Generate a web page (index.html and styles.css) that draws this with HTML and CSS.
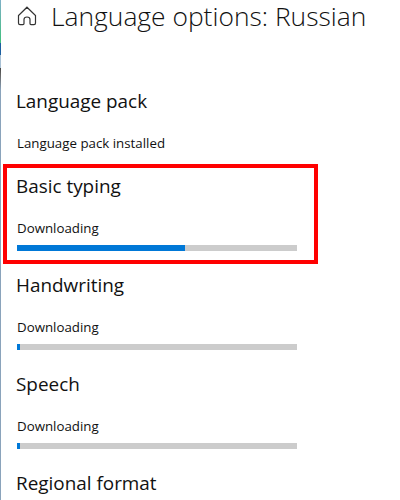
FILE: index.html
```html
<!DOCTYPE html>
<html lang="en">
<head>
<meta charset="utf-8">
<title>Language options: Russian</title>
<link rel="stylesheet" href="styles.css">
</head>
<body>
<div class="edge"></div>
<main class="page">
  <header class="header">
    <svg class="home" width="20" height="20" viewBox="0 0 20 20" fill="none" stroke="#333" stroke-width="1.2"><path d="M10 1.2 L18.5 9.5 V17 Q18.5 18.6 17 18.6 H14 Q13 18.6 13 17.6 V13.5 Q13 11 10 11 Q7 11 7 13.5 V17.6 Q7 18.6 6 18.6 H3 Q1.5 18.6 1.5 17 V9.5 Z"/></svg>
    <h1 class="title">Language options: Russian</h1>
  </header>
  <section class="item first">
    <h2 class="name">Language pack</h2>
    <p class="status">Language pack installed</p>
  </section>
  <section class="item highlighted">
    <h2 class="name">Basic typing</h2>
    <p class="status">Downloading</p>
    <div class="bar"><div class="fill" style="width:60%"></div></div>
  </section>
  <section class="item">
    <h2 class="name">Handwriting</h2>
    <p class="status">Downloading</p>
    <div class="bar"><div class="fill" style="width:1.2%"></div></div>
  </section>
  <section class="item">
    <h2 class="name">Speech</h2>
    <p class="status">Downloading</p>
    <div class="bar"><div class="fill" style="width:1.2%"></div></div>
  </section>
  <section class="item">
    <h2 class="name">Regional format</h2>
  </section>
</main>
</body>
</html>
```
FILE: styles.css
```css
html, body { margin: 0; padding: 0; height: 100%; background: #fff; overflow: hidden; }
body { display: flex; font-family: "Open Sans", "Liberation Sans", sans-serif; color: #111; }
.edge { width: 1px; flex: none; background: linear-gradient(to bottom, #7fb0c8 0, #3fc07c 43px, #1c5fa0 43px, #1c5fa0 55px, #a8c0d4 55px, #a8c0d4 68px, #444 68px, #666 75px, #8aa3bb 90px, #8aa3bb 100%); }
.page { flex: 1; padding: 0 0 0 15px; }
.header { display: flex; align-items: center; height: 30px; gap: 14px; padding-top: 1px; }
.home { flex: none; margin-left: 1px; }
.title { margin: 0 0 1px; font-size: 26.4px; font-weight: 300; line-height: 30px; white-space: nowrap; }
.item { width: 281px; }
.first { margin-top: 59px; }
.name { margin: 0; font-size: 18.9px; font-weight: 400; line-height: 22px; }
.status { margin: 23px 0 0 1px; font-size: 13.3px; line-height: 16px; }
.bar { margin: 9px 0 0 1px; height: 6px; width: 280px; background: #ccc; }
.fill { height: 100%; background: #0078d7; }
.item + .item { margin-top: 23px; }
.item.highlighted { position: relative; margin-top: 24px; }
.highlighted::after { content: ""; position: absolute; left: -13px; top: -11px; width: 307px; height: 92px; border: 4px solid #f00; }
```
